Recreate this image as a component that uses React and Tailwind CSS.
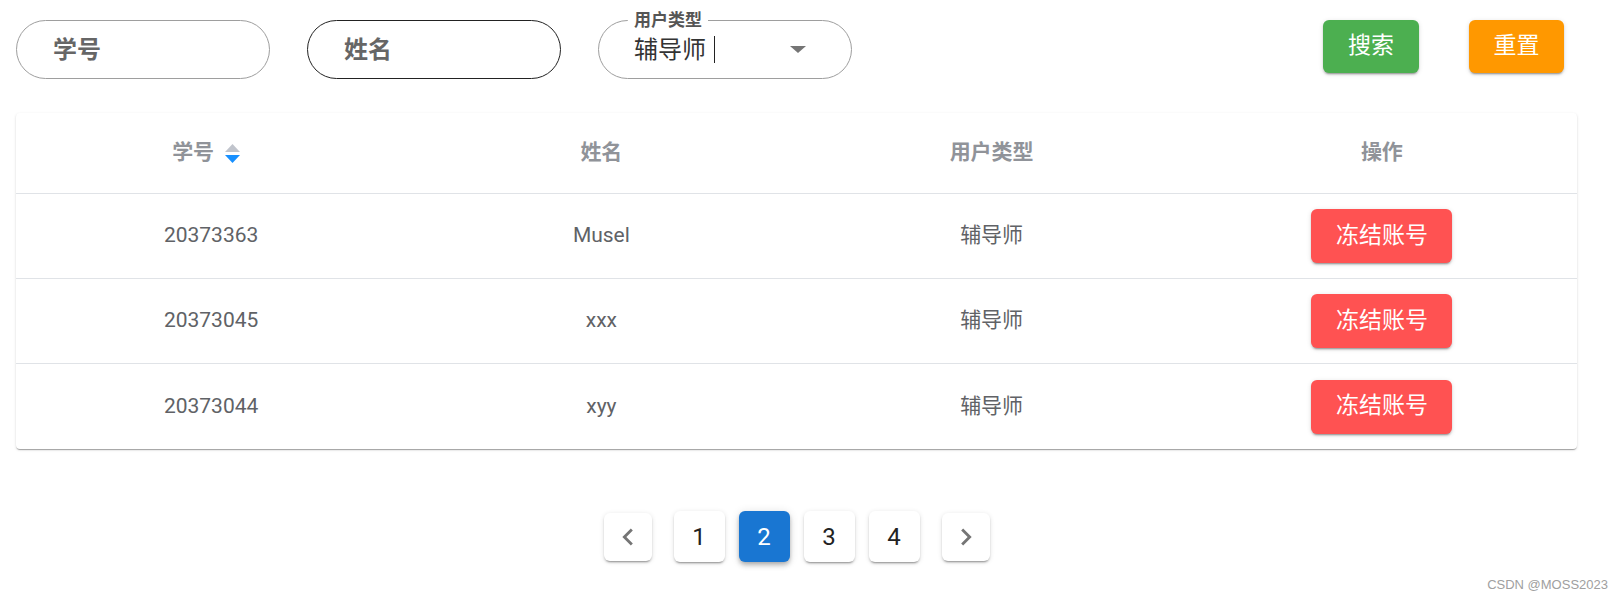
import React from "react";

const F = { fontFamily: 'Roboto, "Noto Sans CJK SC", sans-serif' };

function ChevronLeft() {
  return (
    <svg width="34" height="34" viewBox="0 0 24 24">
      <path d="M15.41,16.58L10.83,12L15.41,7.41L14,6L8,12L14,18L15.41,16.58Z" fill="#757575" />
    </svg>
  );
}
function ChevronRight() {
  return (
    <svg width="34" height="34" viewBox="0 0 24 24">
      <path d="M8.59,16.58L13.17,12L8.59,7.41L10,6L16,12L10,18L8.59,16.58Z" fill="#757575" />
    </svg>
  );
}

const rows = [
  { id: "20373363", name: "Musel", type: "辅导师" },
  { id: "20373045", name: "xxx", type: "辅导师" },
  { id: "20373044", name: "xyy", type: "辅导师" },
];

export default function App() {
  return (
    <div
      className="relative w-[1624px] h-[599px] bg-white overflow-hidden"
      style={F}
    >
      {/* Top filter row */}
      <div className="flex items-start pt-[20px] pl-[16px]">
        <div className="w-[254px] h-[59px] rounded-full border border-[#9e9e9e] flex items-center pl-[36px]">
          <span className="text-[24px] font-bold text-[#666666] leading-none">学号</span>
        </div>
        <div className="ml-[37px] w-[254px] h-[59px] rounded-full border border-[#222222] flex items-center pl-[36px]">
          <span className="text-[24px] font-bold text-[#666666] leading-none">姓名</span>
        </div>
        <div className="relative ml-[37px] w-[254px] h-[59px] rounded-full border border-[#9e9e9e] flex items-center pl-[35px] pr-[45px]">
          <span className="absolute left-[29px] top-[-11px] bg-white px-[6px] text-[17px] font-bold text-[#555555] leading-[20px]">
            用户类型
          </span>
          <span className="text-[24px] text-[#333333] leading-none">辅导师</span>
          <span className="ml-[8px] w-px h-[27px] bg-[#222222]" />
          <svg className="ml-auto" width="16" height="8" viewBox="0 0 16 8">
            <path d="M0 0 L16 0 L8 7 Z" fill="#757575" />
          </svg>
        </div>
        <button className="ml-[471px] w-[96px] h-[53px] rounded-[6px] bg-[#4caf50] text-white text-[23px] shadow-[0_3px_1px_-2px_rgba(0,0,0,0.2),0_2px_2px_0_rgba(0,0,0,0.14),0_1px_5px_0_rgba(0,0,0,0.12)]">
          搜索
        </button>
        <button className="ml-[50px] w-[95px] h-[53px] rounded-[6px] bg-[#ff9800] text-white text-[23px] shadow-[0_3px_1px_-2px_rgba(0,0,0,0.2),0_2px_2px_0_rgba(0,0,0,0.14),0_1px_5px_0_rgba(0,0,0,0.12)]">
          重置
        </button>
      </div>

      {/* Table card */}
      <div className="mt-[34px] ml-[16px] w-[1561px] bg-white rounded-[4px] shadow-[0_2px_1px_-1px_rgba(0,0,0,0.2),0_1px_1px_0_rgba(0,0,0,0.14),0_1px_3px_0_rgba(0,0,0,0.12)]">
        <div className="grid grid-cols-4 h-[81px] border-b border-[#e0e3e7] text-[21px] font-bold text-[#909399]">
          <div className="flex items-center justify-center pr-[10px]">
            <span>学号</span>
            <svg className="ml-[11px]" width="15" height="19" viewBox="0 0 15 19">
              <path d="M7.5 0 L15 8 L0 8 Z" fill="#c0c4cc" />
              <path d="M0 11 L15 11 L7.5 19 Z" fill="#1890ff" />
            </svg>
          </div>
          <div className="flex items-center justify-center">姓名</div>
          <div className="flex items-center justify-center">用户类型</div>
          <div className="flex items-center justify-center">操作</div>
        </div>
        {rows.map((r, i) => (
          <div
            key={r.id}
            className={
              "grid grid-cols-4 h-[85px] text-[21px] text-[#606266] " +
              (i < rows.length - 1 ? "border-b border-[#e0e3e7]" : "")
            }
          >
            <div className="flex items-center justify-center">{r.id}</div>
            <div className="flex items-center justify-center">{r.name}</div>
            <div className="flex items-center justify-center">{r.type}</div>
            <div className="flex items-center justify-center">
              <button className="w-[141px] h-[54px] rounded-[6px] bg-[#ff5252] text-white text-[23px] shadow-[0_3px_1px_-2px_rgba(0,0,0,0.2),0_2px_2px_0_rgba(0,0,0,0.14),0_1px_5px_0_rgba(0,0,0,0.12)]">
                冻结账号
              </button>
            </div>
          </div>
        ))}
      </div>

      {/* Pagination */}
      <div className="mt-[62px] ml-[16px] w-[1561px] flex items-center justify-center">
        <button className="w-[48px] h-[48px] rounded-[6px] bg-white flex items-center justify-center shadow-[0_3px_1px_-2px_rgba(0,0,0,0.2),0_2px_2px_0_rgba(0,0,0,0.14),0_1px_5px_0_rgba(0,0,0,0.12)]">
          <ChevronLeft />
        </button>
        <div className="ml-[22px] flex items-center gap-[14px]">
          {[1, 2, 3, 4].map((n) => (
            <button
              key={n}
              className={
                n === 2
                  ? "w-[51px] h-[51px] rounded-[6px] bg-[#1976d2] text-white text-[24px] shadow-[0_2px_4px_-1px_rgba(0,0,0,0.2),0_4px_5px_0_rgba(0,0,0,0.14),0_1px_10px_0_rgba(0,0,0,0.12)]"
                  : "w-[51px] h-[51px] rounded-[6px] bg-white text-[#222222] text-[24px] shadow-[0_3px_1px_-2px_rgba(0,0,0,0.2),0_2px_2px_0_rgba(0,0,0,0.14),0_1px_5px_0_rgba(0,0,0,0.12)]"
              }
            >
              {n}
            </button>
          ))}
        </div>
        <button className="ml-[22px] w-[48px] h-[48px] rounded-[6px] bg-white flex items-center justify-center shadow-[0_3px_1px_-2px_rgba(0,0,0,0.2),0_2px_2px_0_rgba(0,0,0,0.14),0_1px_5px_0_rgba(0,0,0,0.12)]">
          <ChevronRight />
        </button>
      </div>

      {/* Watermark */}
      <div
        className="absolute right-[16px] bottom-[7px] text-[13px] leading-[15px] text-[#a0a0a0]"
        style={{ fontFamily: '"Liberation Sans", Arial, sans-serif' }}
      >
        CSDN @MOSS2023
      </div>
    </div>
  );
}
